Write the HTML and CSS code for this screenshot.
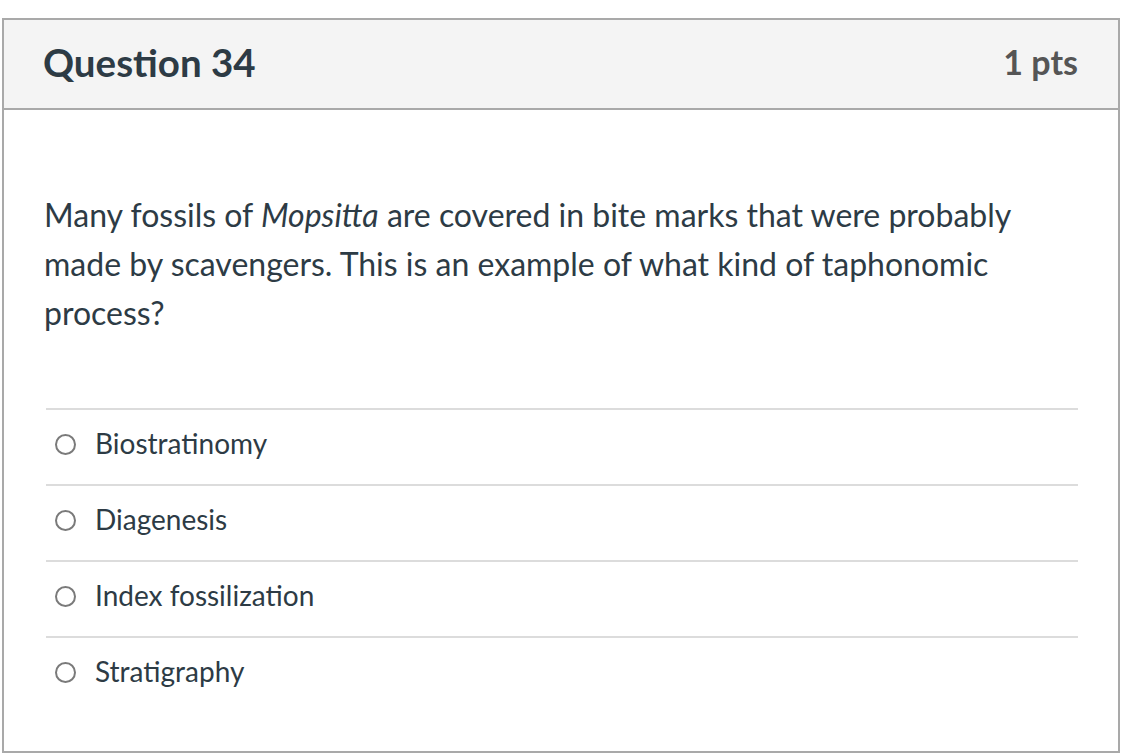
FILE: index.html
```html
<!DOCTYPE html>
<html>
<head>
<meta charset="utf-8">
<link rel="stylesheet" href="styles.css">
</head>
<body>
<div class="question">
  <div class="header">
    <h2 class="title">Question 34</h2>
    <div class="pts">1 pts</div>
  </div>
  <div class="body">
    <p class="text">Many fossils of <em>Mopsitta</em> are covered in bite marks that were probably made by scavengers. This is an example of what kind of taphonomic process?</p>
    <div class="answers">
      <div class="answer"><span class="radio"></span><span class="label">Biostratinomy</span></div>
      <div class="answer"><span class="radio"></span><span class="label">Diagenesis</span></div>
      <div class="answer"><span class="radio"></span><span class="label">Index fossilization</span></div>
      <div class="answer"><span class="radio"></span><span class="label">Stratigraphy</span></div>
    </div>
  </div>
</div>
</body>
</html>
```

FILE: styles.css
```css
html, body {
  margin: 0;
  padding: 0;
  background: #fff;
}
body {
  font-family: Lato, "Open Sans", sans-serif;
  color: #2d3b45;
  padding: 18px 0 0 2px;
}
.question {
  width: 1114px;
  height: 731px;
  border: 2px solid #a9a9a9;
  display: flex;
  flex-direction: column;
}
.header {
  height: 88px;
  background: #f4f4f4;
  border-bottom: 2px solid #a9a9a9;
  display: flex;
  align-items: center;
  justify-content: space-between;
  padding: 0 40px 0 39px;
}
.title {
  margin: 0;
  font-size: 38.5px;
  font-weight: 700;
  color: #2d3b45;
  line-height: 1;
  position: relative;
  top: -2px;
}
.pts {
  font-size: 34px;
  font-weight: 700;
  color: #555;
  line-height: 1;
  position: relative;
  top: -2px;
}
.body {
  padding: 80px 40px 0 42px;
}
.text {
  margin: 0 0 0 -2px;
  font-size: 32px;
  line-height: 49px;
}
.answers {
  margin-top: 71px;
}
.answer {
  border-top: 2px solid #dcdcdc;
  height: 74px;
  display: flex;
  align-items: flex-start;
}
.radio {
  width: 17px;
  height: 17px;
  border: 2px solid #7a7a7a;
  border-radius: 50%;
  margin: 24px 0 0 9px;
  flex: none;
}
.label {
  font-size: 28px;
  line-height: 30px;
  margin: 18px 0 0 19px;
}
```
